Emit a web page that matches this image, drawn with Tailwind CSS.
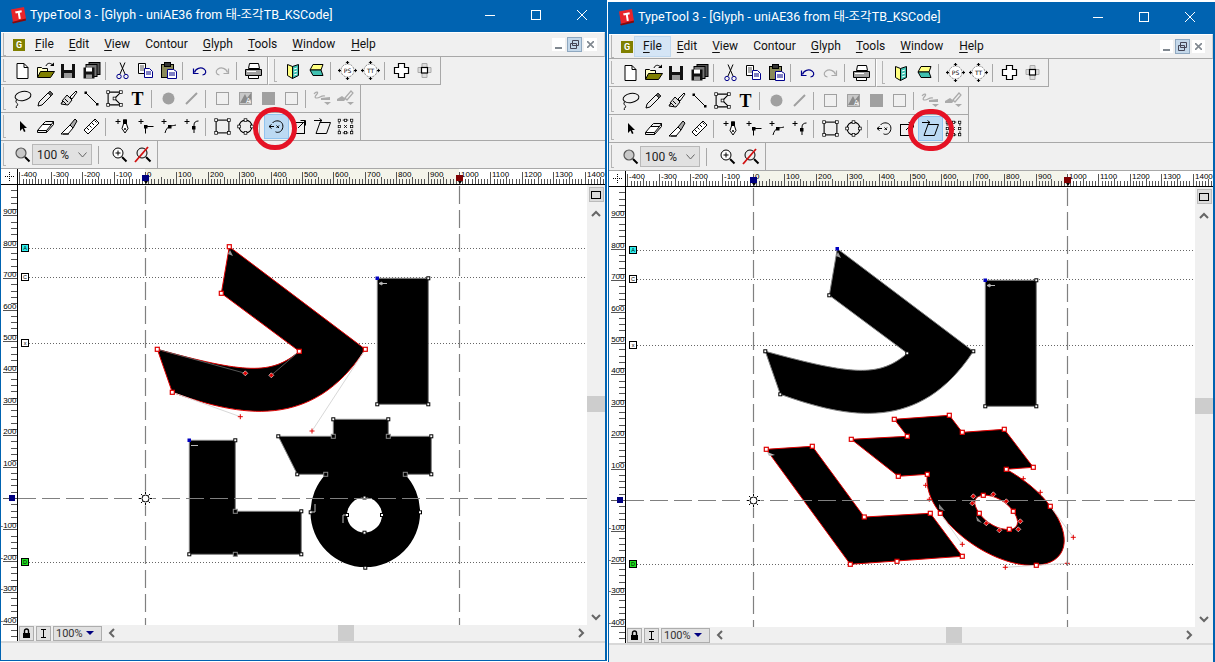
<!DOCTYPE html>
<html lang="ko">
<head>
    <meta charset="UTF-8">
    <title>TypeTool 3</title>
    <script src="https://cdn.jsdelivr.net/npm/@tailwindcss/browser@4"></script>
</head>
<body class="bg-white overflow-hidden">
    <!-- icon set -->
    <svg class="hidden">
        <symbol id="i-new" viewBox="0 0 21 21"><path d="M5 3.500h7l4 4v11H5z" fill="#fff" stroke="#000"/><path d="M12 3.500v4h4" fill="none" stroke="#000"/></symbol>
        <symbol id="i-open" viewBox="0 0 21 21"><path d="M2.500 17V7.500h4l1 1h5v3" fill="#ffffc8" stroke="#000"/><path d="M2.500 17.500l3-6h14l-4 6z" fill="#808000" stroke="#000"/><path d="M11 6c1-3 4-3.500 6-1.500" fill="none" stroke="#000"/><path d="M15 6h4V2.500z" fill="#000"/></symbol>
        <symbol id="i-save" viewBox="0 0 21 21"><rect x="3" y="4" width="14" height="14" fill="#111"/><rect x="6" y="4" width="8" height="6" fill="#eee"/><rect x="6" y="13" width="8" height="5" fill="#999"/></symbol>
        <symbol id="i-saveall" viewBox="0 0 21 21"><rect x="8" y="2.500" width="11" height="12" fill="#555" stroke="#000"/><rect x="5" y="4.500" width="11" height="12" fill="#777" stroke="#000"/><rect x="2.500" y="7.500" width="11" height="11" fill="#111"/><rect x="5" y="7.500" width="6" height="4" fill="#fff"/><rect x="5" y="14.500" width="6" height="4" fill="#999"/></symbol>
        <symbol id="i-cut" viewBox="0 0 21 21"><path d="M8 14L13 2.500M13 14L8 2.500" stroke="#000" fill="none"/><circle cx="7" cy="16.500" r="2.200" fill="none" stroke="#00008b"/><circle cx="14" cy="16.500" r="2.200" fill="none" stroke="#00008b"/></symbol>
        <symbol id="i-copy" viewBox="0 0 21 21"><path d="M3.500 3.500h7v10h-7z" fill="#fff" stroke="#000"/><path d="M5 6h4M5 8h4M5 10h4" stroke="#555"/><path d="M9.500 8.500h5l3 3v6h-8z" fill="#fff" stroke="#00008b"/><path d="M11 12h5M11 14h5" stroke="#00008b"/></symbol>
        <symbol id="i-paste" viewBox="0 0 21 21"><rect x="3.500" y="4.500" width="12" height="13" fill="#8a8a5a" stroke="#000"/><rect x="6.500" y="2.500" width="6" height="4" fill="#333" stroke="#000"/><path d="M9.500 9.500h6l3 2v7h-9z" fill="#fff" stroke="#00008b"/><path d="M11 13h6M11 15h6" stroke="#00008b"/></symbol>
        <symbol id="i-undo" viewBox="0 0 21 21"><path d="M5.500 12.500C6.500 8 12 7 15 9s2 5.500-1.500 6" fill="none" stroke="#00008b" stroke-width="1.200"/><path d="M4.500 8.500v5h5" fill="none" stroke="#00008b" stroke-width="1.200"/></symbol>
        <symbol id="i-redo" viewBox="0 0 21 21"><path d="M15.500 12.500C14.500 8 9 7 6 9s-2 5.500 1.500 6" fill="none" stroke="#aaa" stroke-width="1.200"/><path d="M16.500 8.500v5h-5" fill="none" stroke="#aaa" stroke-width="1.200"/></symbol>
        <symbol id="i-print" viewBox="0 0 21 21"><path d="M6.500 3.500h9l1 5h-11z" fill="#fff" stroke="#000"/><path d="M2.500 9.500h16v6h-16z" fill="#a0a0a0" stroke="#000"/><path d="M5.500 15.500h10v3h-10z" fill="#fff" stroke="#000"/><path d="M4 11.500h9" stroke="#fff"/></symbol>
        <symbol id="i-book1" viewBox="0 0 21 21"><path d="M4.500 4.500l5 2v12l-5-3z" fill="#ffff80" stroke="#000"/><path d="M15.500 4.500l-6 2v12l6-3z" fill="#40c0b0" stroke="#000"/><path d="M11 9l3-1M11 12l3-1M11 15l3-1" stroke="#fff"/></symbol>
        <symbol id="i-book2" viewBox="0 0 21 21"><path d="M7 4.500h10l-2 5.500H4z" fill="#ffff80" stroke="#000"/><path d="M4 10h11l2 5.500H7z" fill="#40c0b0" stroke="#000"/></symbol>
        <symbol id="i-movep" viewBox="0 0 21 21"><circle cx="10.500" cy="10.500" r="6.500" fill="#fff" stroke="#888" stroke-dasharray="2 1"/><path d="M10.500 1v3M10.500 17v3M1 10.500h3M17 10.500h3" stroke="#000"/><path d="M8.500 3l2-2 2 2zM8.500 18l2 2 2-2zM3 8.500l-2 2 2 2zM18 8.500l2 2-2 2z"/><text x="10.500" y="13" text-anchor="middle" font-family="DejaVu Sans" font-size="6">PS</text></symbol>
        <symbol id="i-movet" viewBox="0 0 21 21"><circle cx="10.500" cy="10.500" r="6.500" fill="#fff" stroke="#888" stroke-dasharray="2 1"/><path d="M10.500 1v3M10.500 17v3M1 10.500h3M17 10.500h3" stroke="#000"/><path d="M8.500 3l2-2 2 2zM8.500 18l2 2 2-2zM3 8.500l-2 2 2 2zM18 8.500l2 2-2 2z"/><text x="10.500" y="13" text-anchor="middle" font-family="DejaVu Sans" font-size="6">TT</text></symbol>
        <symbol id="i-plus" viewBox="0 0 21 21"><path d="M7.500 3.500h6v4h4v6h-4v4h-6v-4h-4v-6h4z" fill="#fff" stroke="#000" stroke-width="1.200"/></symbol>
        <symbol id="i-plusg" viewBox="0 0 21 21"><path d="M8 3.500h5v4h4v5h-4v5H8v-5H4v-5h4z" fill="#ddd" stroke="#aaa"/><rect x="7.500" y="7.500" width="6" height="5.500" fill="#fff" stroke="#000" stroke-width="1.200"/></symbol>
        <symbol id="i-lasso" viewBox="0 0 21 21"><ellipse cx="11" cy="8" rx="8" ry="4.500" transform="rotate(-10 11 8)" fill="none" stroke="#000"/><path d="M4.500 12c-2 3 2 3 1 5s-2 1-1 3" fill="none" stroke="#000"/></symbol>
        <symbol id="i-pencil" viewBox="0 0 21 21"><path d="M15 3l3 3L7 17l-4 1 1-4z" fill="#eee" stroke="#000"/><path d="M13 5l3 3" stroke="#000"/><path d="M15 3l3 3-2 2-3-3z" fill="#555"/></symbol>
        <symbol id="i-brush" viewBox="0 0 21 21"><path d="M12 9l6-6 1 1-5 7z" fill="#fff" stroke="#000"/><path d="M9 7l5 5-4 5-7-1 1-2 1 0-1-1z" fill="#ddd" stroke="#000"/><path d="M5 13l3 3M7 11l3 3" stroke="#000"/></symbol>
        <symbol id="i-line" viewBox="0 0 21 21"><path d="M5 5l11 11" stroke="#000"/><rect x="3.500" y="3.500" width="2.500" height="2.500"/><rect x="15" y="15" width="2.500" height="2.500"/></symbol>
        <symbol id="i-shape" viewBox="-1 -1 23 23"><path d="M3.500 3.500h14l-7 7 7 7h-14z" fill="none" stroke="#000" stroke-width="1.200"/><rect x="2" y="2" width="3" height="3" fill="#fff" stroke="#000" stroke-width=".8"/><rect x="16" y="2" width="3" height="3" fill="#fff" stroke="#000" stroke-width=".8"/><rect x="2" y="16" width="3" height="3" fill="#fff" stroke="#000" stroke-width=".8"/><rect x="16" y="16" width="3" height="3" fill="#fff" stroke="#000" stroke-width=".8"/><rect x="9" y="9" width="3" height="3" fill="#fff" stroke="#000" stroke-width=".8"/></symbol>
        <symbol id="i-t" viewBox="0 0 21 21"><text x="10.500" y="17" text-anchor="middle" font-family="Liberation Serif" font-size="18" font-weight="700">T</text></symbol>
        <symbol id="i-dot" viewBox="0 0 21 21"><circle cx="10.500" cy="10.500" r="6" fill="#a0a0a0"/></symbol>
        <symbol id="i-slash" viewBox="0 0 21 21"><path d="M5 16L16 5" stroke="#a0a0a0" stroke-width="2"/></symbol>
        <symbol id="i-box" viewBox="0 0 21 21"><rect x="4.500" y="4.500" width="12" height="12" fill="none" stroke="#a0a0a0"/></symbol>
        <symbol id="i-img" viewBox="0 0 21 21"><rect x="4.500" y="4.500" width="12" height="12" fill="#c8c8c8" stroke="#a0a0a0"/><path d="M5 15l5-9 2 4 4-5v6l-3 4z" fill="#8a8a8a"/><text x="11" y="15" font-family="DejaVu Sans" font-size="7" fill="#fff">A</text></symbol>
        <symbol id="i-solid" viewBox="0 0 21 21"><rect x="4" y="4" width="13" height="13" fill="#a0a0a0"/></symbol>
        <symbol id="i-wave" viewBox="0 0 21 21"><path d="M2 6c2-3 5-2 3 0s-3 4 0 4 4-3 8-2" fill="none" stroke="#aaa" stroke-width="1.200"/><path d="M9 10l9-1v3H9z" fill="#aaa"/><path d="M12 14h7l-3.500 3z" fill="#aaa"/></symbol>
        <symbol id="i-pen" viewBox="0 0 21 21"><path d="M2 11l5-3 4 3-2 2H2z" fill="#aaa"/><path d="M10 10l6-7 2 2-6 7z" fill="none" stroke="#aaa" stroke-width="1.200"/><path d="M12 14h7l-3.500 3z" fill="#aaa"/></symbol>
        <symbol id="i-arrow" viewBox="0 0 21 21"><path d="M8 5v10l2.500-2.500 1.500 3.500 1.500-.8-1.500-3.200h3z" fill="#000"/></symbol>
        <symbol id="i-eraser" viewBox="0 0 21 21"><path d="M2.500 14.500l5-6h9l-5 6z" fill="#fff" stroke="#000"/><path d="M7.500 8.500l3-3h8l-2 3M11.500 14.500v2h-9v-2M18.500 5.500v3l-7 8" fill="none" stroke="#000"/></symbol>
        <symbol id="i-knife" viewBox="0 0 21 21"><path d="M3 18l9-9 3 3-5 6z" fill="#fff" stroke="#000"/><path d="M12 9l5-6 2 2-4 7z" fill="#aaa" stroke="#000"/><path d="M5 18h6" stroke="#000"/></symbol>
        <symbol id="i-ruler" viewBox="0 0 21 21"><path d="M3 14L14 3l4 4L7 18z" fill="#fff" stroke="#000"/><path d="M6 12l2 2M8.500 9.500l2 2M11 7l2 2M13.500 4.500l2 2" stroke="#000"/></symbol>
        <symbol id="i-add1" viewBox="0 0 21 21"><path d="M3.500 5.500h5M6 3v5" stroke="#000"/><path d="M11.500 4h3v4l1.500 4.500-3 4.500-3-4.500L11.500 8z" fill="#fff" stroke="#000"/><rect x="11" y="3.500" width="4" height="4.500"/><circle cx="13" cy="13" r="1"/></symbol>
        <symbol id="i-add2" viewBox="0 0 21 21"><path d="M3.500 5.500h5M6 3v5" stroke="#000"/><path d="M10.500 10.500h8M10.500 10.500v7" stroke="#000"/><rect x="9" y="9" width="3.500" height="3.500"/></symbol>
        <symbol id="i-add3" viewBox="0 0 21 21"><path d="M3.500 5.500h5M6 3v5" stroke="#000"/><path d="M7 17c1-4 3-6.500 5.500-7s4-.5 5.500-1" fill="none" stroke="#000"/><rect x="10" y="9" width="3.500" height="3.500"/></symbol>
        <symbol id="i-add4" viewBox="0 0 21 21"><path d="M3.500 5.500h5M6 3v5" stroke="#000"/><path d="M13 17v-8c0-3 2-4 4.500-4" fill="none" stroke="#000"/><rect x="11" y="10" width="3.500" height="3.500"/></symbol>
        <symbol id="i-rect" viewBox="-1 -1 23 23"><rect x="3.500" y="3.500" width="14" height="14" fill="#eee" stroke="#000" stroke-width="1.200"/><rect x="2" y="2" width="3" height="3" fill="#fff" stroke="#000" stroke-width=".8"/><rect x="16" y="2" width="3" height="3" fill="#fff" stroke="#000" stroke-width=".8"/><rect x="2" y="16" width="3" height="3" fill="#fff" stroke="#000" stroke-width=".8"/><rect x="16" y="16" width="3" height="3" fill="#fff" stroke="#000" stroke-width=".8"/></symbol>
        <symbol id="i-oval" viewBox="-1 -1 23 23"><circle cx="10.500" cy="10.500" r="7" fill="#eee" stroke="#000" stroke-width="1.200"/><rect x="9" y="2" width="3" height="3" fill="#fff" stroke="#000" stroke-width=".8"/><rect x="9" y="16" width="3" height="3" fill="#fff" stroke="#000" stroke-width=".8"/><rect x="2" y="9" width="3" height="3" fill="#fff" stroke="#000" stroke-width=".8"/><rect x="16" y="9" width="3" height="3" fill="#fff" stroke="#000" stroke-width=".8"/></symbol>
        <symbol id="i-rotate" viewBox="0 0 21 21"><path d="M6.500 7C8.500 4.500 13 4 15.500 6.500s1.500 8-2 9.500c-1.500.5-3 .5-4-.2" fill="none" stroke="#000"/><path d="M3 10.500h5M5.500 8.500l-2.500 2 2.500 2" fill="none" stroke="#000"/><path d="M10.500 9.500l2.500 2.500M13 9.500l-2.500 2.500" stroke="#000"/></symbol>
        <symbol id="i-scale" viewBox="0 0 21 21"><rect x="3.500" y="6.500" width="12" height="11" fill="none" stroke="#000"/><path d="M9 12l7-7M11.500 4.500h5V9.500" fill="none" stroke="#000"/></symbol>
        <symbol id="i-skew" viewBox="0 0 21 21"><path d="M8 6.500h10.500l-4 11H4z" fill="none" stroke="#000"/><path d="M2 4.500h8M7.500 2.500l2.500 2-2.500 2" fill="none" stroke="#000"/></symbol>
        <symbol id="i-flip" viewBox="-1 -1 23 23"><rect x="3.500" y="3.500" width="14" height="14" fill="none" stroke="#000" stroke-dasharray="2 2"/><path d="M9 9l3 3M12 9l-3 3" stroke="#000"/><rect x="2.500" y="2.500" width="2.500" height="2.500" fill="#fff" stroke="#000" stroke-width=".8"/><rect x="16" y="2.500" width="2.500" height="2.500" fill="#fff" stroke="#000" stroke-width=".8"/><rect x="2.500" y="16" width="2.500" height="2.500" fill="#fff" stroke="#000" stroke-width=".8"/><rect x="16" y="16" width="2.500" height="2.500" fill="#fff" stroke="#000" stroke-width=".8"/><rect x="9.300" y="2.500" width="2.500" height="2.500" fill="#fff" stroke="#000" stroke-width=".8"/><rect x="9.300" y="16" width="2.500" height="2.500" fill="#fff" stroke="#000" stroke-width=".8"/><rect x="16" y="9.300" width="2.500" height="2.500" fill="#fff" stroke="#000" stroke-width=".8"/><rect x="2.500" y="9.300" width="2.500" height="2.500" fill="#fff" stroke="#000" stroke-width=".8"/></symbol>
        <symbol id="i-zoom" viewBox="0 0 21 21"><circle cx="9" cy="9" r="5" fill="#c8c8c8" stroke="#555" stroke-width="1.200"/><path d="M13 13l4.500 4.500" stroke="#000" stroke-width="2"/></symbol>
        <symbol id="i-zoomin" viewBox="0 0 21 21"><circle cx="9" cy="9" r="5" fill="#fff" stroke="#000"/><path d="M6.500 9h5M9 6.500v5" stroke="#000"/><path d="M13 13l4.500 4.500" stroke="#000" stroke-width="2"/></symbol>
        <symbol id="i-zoomout" viewBox="0 0 21 21"><circle cx="10" cy="9" r="5" fill="#eee" stroke="#000"/><path d="M14 13l4.500 4.500" stroke="#000" stroke-width="2"/><path d="M3 18L16 3" stroke="#d01010" stroke-width="1.800"/></symbol>
    </svg>

    <div id="desk" class="flex gap-px h-[662px] overflow-hidden"></div>

    <script>
        const SCALE = 0.314;
        const ZX = 145, ZY = 498;

        function btn(name, on) {
            const cls = on
                ? 'w-[23px] h-[23px] flex items-center justify-center bg-[#bcdaf3] outline outline-1 outline-[#90c4f0]'
                : 'w-[23px] h-[23px] flex items-center justify-center';
            return `<div class="${cls}"><svg class="w-[21px] h-[21px]"><use href="#i-${name}"/></svg></div>`;
        }
        const sep = '<div class="w-[8px] h-[27px] pl-[2px] flex items-center"><div class="w-px h-[18px] bg-[#a8a8a8]"></div></div>';
        const grip = '<div class="w-[3px] h-[23px] ml-[2px] mr-[5px] border-l border-b border-[#b4b4b4]"></div>';

        function icons(list, active) {
            return list.map(n => n === '|' ? sep : btn(n, n === active)).join('');
        }

        function rulerH() {
            let s = `<rect x="${ZX}" y="169" width="${1000 * SCALE}" height="15" fill="#f4f4ea"/>`;
            for (let u = -400; u <= 1460; u += 10) {
                const x = Math.round(ZX + u * SCALE) + 0.5;
                const top = u % 100 === 0 ? 172 : u % 50 === 0 ? 177 : 179;
                s += `<path d="M${x} ${top}V184" stroke="#555"/>`;
                if (u % 100 === 0 && u <= 1400) s += `<text x="${x + 1.5}" y="177" font-family="Liberation Sans" font-size="8" fill="#000">${u}</text>`;
            }
            s += `<path d="M18 184.500H605" stroke="#000"/>`;
            s += `<rect x="142" y="175" width="7" height="6" fill="#000080"/><path d="M144 181l2 3 2-3z" fill="#000"/>`;
            s += `<rect x="456" y="175" width="7" height="6" fill="#800000"/><path d="M458 181l2 3 2-3z" fill="#000"/>`;
            return s;
        }

        function rulerV() {
            let s = '';
            for (let u = 1000; u >= -460; u -= 20) {
                const y = Math.round(ZY - u * SCALE) + 0.5;
                const left = u % 100 === 0 ? 3 : 11;
                s += `<path d="M${left} ${y}H17" stroke="#555"/>`;
                if (u % 100 === 0 && u <= 900 && u >= -400 && u !== 0) s += `<text x="16.500" y="${y - 1.5}" text-anchor="end" font-family="Liberation Sans" font-size="8" fill="#000">${u}</text>`;
            }
            s += `<path d="M17.500 185V641" stroke="#000"/>`;
            s += `<rect x="9" y="${ZY - 3}" width="6" height="6" fill="#000080"/>`;
            return s;
        }

        function marker(y, label, fill) {
            return `<rect x="21.500" y="${y - 3.5}" width="7" height="7" fill="${fill}" stroke="#000"/><text x="25" y="${y + 2}" text-anchor="middle" font-family="Liberation Sans" font-size="5.500" fill="#000">${label}</text>`;
        }
        function redNode(x, y) {
            return `<rect x="${x - 2}" y="${y - 2}" width="4" height="4" fill="#fff" stroke="#e00000" stroke-width="1.200"/>`;
        }
        function blackNode(x, y) {
            return `<rect x="${x - 1.5}" y="${y - 1.5}" width="3" height="3" fill="#fff" stroke="#000"/>`;
        }
        function grayNode(x, y) {
            return `<rect x="${x - 2}" y="${y - 2}" width="4" height="4" fill="#000" stroke="#888"/>`;
        }
        function plus(x, y) {
            return `<path d="M${x - 2.5} ${y}h5M${x} ${y - 2.5}v5" stroke="#e00000"/>`;
        }
        function diamond(x, y) {
            return `<path d="M${x} ${y - 2.5}l2.500 2.500-2.500 2.500-2.500-2.500z" fill="#e00000" stroke="#fff" stroke-width=".6"/>`;
        }
        function handle(x1, y1, x2, y2, c) {
            return `<path d="M${x1} ${y1}L${x2} ${y2}" stroke="${c || '#d8d8d8'}"/>`;
        }

        const TOP_A = 'M229.300 246.700L365.300 349.300C312 431 240.300 416.700 172.300 392.300L157.300 349.300C245.300 373.300 271.300 375.300 299.300 351.300L221.300 293.300Z';
        const TOP_B = 'M377.300 278.300H428.300V404.300H377.300Z';
        const TOP_PTS = [[221.3, 293.3], [299.3, 351.3], [157.3, 349.3], [172.3, 392.3], [365.3, 349.3]];
        const LOW_L = 'M189.300 440.300H235.300V511.300H301.300V554.300H189.300Z';
        const LOW_H = 'M405.300 474.300H431.300V436.300H388.300V419.300H333.300V436.300H278.300L297.300 474.300H325.700';

        // parts that sit in both windows
        function upper(selected) {
            const stroke = selected ? '#e00000' : '#808080';
            let s = `<path d="${TOP_A}" fill="#000" stroke="${stroke}"/><path d="${TOP_B}" fill="#000" stroke="#808080"/>`;
            if (selected) {
                s += handle(365.3, 349.3, 312, 431) + handle(172.3, 392.3, 240.3, 416.7);
                s += handle(157.3, 349.3, 245.3, 373.3, '#555') + handle(299.3, 351.3, 271.3, 375.3, '#555');
                s += TOP_PTS.map(p => redNode(p[0], p[1])).join('') + redNode(229.3, 246.7);
                s += plus(240.3, 416.7) + plus(312, 431) + diamond(245.3, 373.3) + diamond(271.3, 375.3);
            } else {
                s += TOP_PTS.map(p => blackNode(p[0], p[1])).join('');
                s += `<rect x="227.500" y="245" width="3.500" height="3.500" fill="#0000c0"/>`;
            }
            s += `<path d="M230 250l3 6-5-2z" fill="#999"/>`;
            s += `<rect x="375.500" y="276.500" width="3.500" height="3.500" fill="#0000c0"/><path d="M379 283.500h8M379 283.500l3-1.500v3z" stroke="#bbb"/>`;
            s += [[428.3, 278.3], [377.3, 404.3], [428.3, 404.3]].map(p => blackNode(p[0], p[1])).join('');
            return s;
        }

        function lowerPlain() {
            let s = `<path d="${LOW_L}" fill="#000" stroke="#808080"/><path fill-rule="evenodd" fill="#000" d="M310.500 512.300a54.800 54.800 0 1 0 109.600 0a54.800 54.800 0 1 0 -109.600 0ZM347 515a17.500 17.500 0 1 0 35 0a17.500 17.500 0 1 0 -35 0Z"/><path d="${LOW_H}" fill="#000" stroke="#808080"/>`;
            s += [[235.3, 440.3], [301.3, 511.3], [301.3, 554.3], [189.3, 554.3], [333.3, 419.3], [388.3, 419.3], [431.3, 436.3], [431.3, 474.3], [297.3, 474.3], [278.3, 436.3]].map(p => blackNode(p[0], p[1])).join('');
            s += [[235.3, 511.3], [235.3, 554.3], [333.3, 436.3], [388.3, 436.3], [405.3, 474.3], [325.7, 474.3]].map(p => grayNode(p[0], p[1])).join('');
            s += [[310.7, 512.3], [420, 512.3], [365.3, 567.7], [347, 515], [382, 515], [364.5, 497.5], [364.5, 532.7]].map(p => blackNode(p[0], p[1])).join('');
            s += `<rect x="187.500" y="438.500" width="3.500" height="3.500" fill="#0000c0"/><path d="M191 445.500h7" stroke="#bbb"/>`;
            s += `<path d="M315 504v8h-4M343 515h3M343 515v8" fill="none" stroke="#bbb"/>`;
            return s;
        }

        function lowerSkewed() {
            const on = [[766.3, 449.3], [812.3, 446.3], [864.3, 517], [930.3, 513.3], [962.3, 556.3], [897, 561.3], [850.3, 564.3], [894.3, 419.3], [949.3, 415.3], [962.3, 432.3], [1004.3, 429.3], [1033.3, 467.3], [1006.3, 469.3], [1050.3, 506.3], [1036.3, 565.3], [940.3, 513.3], [927.3, 474.3], [898.3, 476.3], [851.3, 439.3], [907.3, 436.3], [983.3, 495.3], [1013.3, 511.3], [1009.3, 529.3], [979.3, 513.3]];
            const off = [[1023.3, 478.7], [1040.3, 492.3], [1073.3, 537.3], [1067.3, 563.3], [1005.3, 567.3], [962.3, 544.3], [929.3, 499.3], [925.7, 485.3]];
            const dia = [[993.3, 494.3], [1006.3, 501.3], [1020.3, 521.3], [1018.3, 529.3], [999.3, 530.3], [986.3, 523.3], [972.3, 503.3], [973.3, 496.3]];
            let s = `<g transform="translate(-608 -2)">`;
            s += `<path d="M766.300 449.300L812.300 446.300L864.300 517L930.300 513.300L962.300 556.300L850.300 564.300Z" fill="#000" stroke="#e00000"/>`;
            s += `<path fill-rule="evenodd" fill="#000" stroke="#e00000" d="M894.300 419.300L949.300 415.300L962.300 432.300L1004.300 429.300L1033.300 467.300L1006.300 469.300C1023.300 478.700 1040.300 492.300 1050.300 506.300C1073.300 537.300 1067.300 563.300 1036.300 565.300C1005.300 567.300 962.300 544.300 940.300 513.300C929.300 499.300 925.700 485.300 927.300 474.300L898.300 476.300L851.300 439.300L907.300 436.300Z M983.300 495.300C993.300 494.300 1006.300 501.300 1013.300 511.300C1020.300 521.300 1018.300 529.300 1009.300 529.300C999.300 530.300 986.300 523.300 979.300 513.300C972.300 503.300 973.300 496.300 983.300 495.300Z"/>`;
            s += handle(1050.3, 506.3, 1073.3, 537.3) + handle(1036.3, 565.3, 1067.3, 563.3) + handle(1036.3, 565.3, 1005.3, 567.3) + handle(940.3, 513.3, 962.3, 544.3);
            s += on.map(p => redNode(p[0], p[1])).join('') + off.map(p => plus(p[0], p[1])).join('') + dia.map(p => diamond(p[0], p[1])).join('');
            s += `<path d="M767 452l8 3-6 1z" fill="#bbb"/><path d="M939 504l6 7-6-2z" fill="#888"/><path d="M976 516l6 7-5-2z" fill="#888"/>`;
            return s + '</g>';
        }

        function canvas(right) {
            const marks = [[248, 'A', '#30f0f0'], [277, 'C', '#fff'], [343, 'x', '#fff'], [562, 'D', '#20e020']];
            let s = '';
            marks.forEach(m => {
                s += `<path d="M29 ${m[0] + 0.5}H587" stroke="#666" stroke-dasharray="1 2"/>`;
            });
            s += right ? upper(false) + lowerSkewed() : upper(true) + lowerPlain();
            s += `<path d="M145.500 186V625M459.500 186V625" stroke="#808080" stroke-width="1.200" stroke-dasharray="18 6"/>`;
            s += `<path d="M18 498.500H587" stroke="#808080" stroke-width="1.200" stroke-dasharray="18 6"/>`;
            s += `<circle cx="145.500" cy="498.500" r="7" fill="#fff"/><circle cx="145.500" cy="498.500" r="3.500" fill="#fff" stroke="#000"/><path d="M145.500 492v2M145.500 503v2M139 498.500h2M150 498.500h2M141 494l1.500 1.500M148.500 501.500l1.500 1.500M150 494l-1.500 1.500M142.500 501.500L141 503" stroke="#000"/>`;
            marks.forEach(m => { s += marker(m[0], m[1], m[2]); });
            return s;
        }

        function menu(fileOn) {
            const u = t => `<span class="underline underline-offset-2">${t}</span>`;
            return `
                <div class="${fileOn ? 'bg-[#d5e5f5] outline outline-1 outline-[#c0d8ee]' : ''} h-[19px] px-[8px] -ml-[8px]">${u('F')}ile</div>
                <div class="h-[19px] ml-[7px]">${u('E')}dit</div>
                <div class="h-[19px] ml-[15px]">${u('V')}iew</div>
                <div class="h-[19px] ml-[15px]">Contour</div>
                <div class="h-[19px] ml-[15px]">${u('G')}lyph</div>
                <div class="h-[19px] ml-[15px]">${u('T')}ools</div>
                <div class="h-[19px] ml-[15px]">${u('W')}indow</div>
                <div class="h-[19px] ml-[16px]">${u('H')}elp</div>`;
        }

        function win(right) {
            const active = right ? 'skew' : 'rotate';
            const ring = right ? 'left-[299px] top-[107px] w-[46px] h-[42px]' : 'left-[252px] top-[107px] w-[44px] h-[43px]';
            const extra = right ? 'mt-[2px]' : '';
            return `
            <div class="relative ${extra} w-[607px] h-[661px] shrink-0 flex flex-col bg-[#0063b1] border-l border-r-2 border-b border-[#0063b1] font-['Roboto','Noto_Sans_CJK_KR',sans-serif] text-black">
                <!-- title bar -->
                <div class="h-[32px] pb-[2px] shrink-0 flex items-center text-white">
                    <svg class="w-[18px] h-[18px] ml-[8px] mr-[3px]" viewBox="0 0 18 18"><path d="M2 3.500L15 1l2 12-13 3z" fill="#e8242a"/><path d="M3 16l1 1.500 13-3-.2-2z" fill="#8a0808"/><path d="M6 5.500l6.500-1.200.3 2-2 .4 1 6-2 .4-1-6-2 .4z" fill="#fff"/></svg>
                    <div class="text-[12.500px] tracking-[0.05px]">TypeTool 3 - [Glyph - uniAE36 from 태-조각TB_KSCode]</div>
                    <div class="ml-auto flex items-center">
                        <div class="w-[46px] h-[30px] flex items-center justify-center"><div class="w-[10px] h-px bg-white"></div></div>
                        <div class="w-[46px] h-[30px] flex items-center justify-center"><div class="w-[10px] h-[10px] border border-white"></div></div>
                        <div class="w-[46px] h-[30px] flex items-center justify-center"><svg class="w-[10px] h-[10px]" viewBox="0 0 10 10"><path d="M0 0l10 10M10 0L0 10" stroke="#fff"/></svg></div>
                    </div>
                </div>
                <div class="flex-1 min-h-0 flex flex-col bg-[#f0f0f0]">
                    <!-- menu -->
                    <div class="h-[25px] shrink-0 flex items-center border-b border-t border-t-white border-b-[#a8a8a8] border-r border-r-[#d0d0d0] text-[12px] leading-[19px] text-[#111]">
                        ${grip}
                        <div class="w-[14px] h-[14px] ml-px mr-[9px] flex items-center justify-center"><div class="w-[12px] h-[12px] bg-[#808000] text-white text-[9px] font-bold leading-[12px] text-center">G</div></div>
                        ${menu(right)}
                        <div class="ml-auto mr-[7px] flex items-center gap-[2px]">
                            <div class="w-[13px] h-[13px] bg-white flex items-end justify-center pb-[2px]"><div class="w-[7px] h-[2px] bg-[#808890]"></div></div>
                            <div class="w-[15px] h-[15px] bg-[#c4d8ea] border border-[#8fa8c0] flex items-center justify-center"><svg class="w-[11px] h-[11px]" viewBox="0 0 11 11"><path d="M3.500 1.500h6v5h-6zM1.500 4.500h6v5h-6z" fill="#c4d8ea" stroke="#445"/></svg></div>
                            <div class="w-[13px] h-[13px] bg-white flex items-center justify-center"><svg class="w-[7px] h-[7px]" viewBox="0 0 7 7"><path d="M0 0l7 7M7 0L0 7" stroke="#808890" stroke-width="1.600"/></svg></div>
                        </div>
                    </div>
                    <!-- toolbars -->
                    <div class="h-[28px] shrink-0 flex">
                        <div class="w-[267px] h-full flex items-center border-b border-r border-[#a8a8a8]">${grip}${icons(['new', 'open', 'save', 'saveall', '|', 'cut', 'copy', 'paste', '|', 'undo', 'redo', '|', 'print'])}</div>
                        <div class="w-[173px] pl-[3px] h-full flex items-center border-b border-r border-[#a8a8a8] border-l border-l-white">${grip}${icons(['book1', 'book2', '|', 'movep', 'movet', '|', 'plus', 'plusg'])}</div>
                    </div>
                    <div class="h-[28px] shrink-0 flex">
                        <div class="w-[360px] h-full flex items-center border-b border-r border-[#a8a8a8]">${grip}${icons(['lasso', 'pencil', 'brush', 'line', 'shape', 't', '|', 'dot', 'slash', '|', 'box', 'img', 'solid', 'box', '|', 'wave', 'pen'])}</div>
                    </div>
                    <div class="h-[28px] shrink-0 flex border-b border-[#a8a8a8]">
                        <div class="w-[360px] h-full flex items-center border-r border-[#a8a8a8]">${grip}${icons(['arrow', 'eraser', 'knife', 'ruler', '|', 'add1', 'add2', 'add3', 'add4', '|', 'rect', 'oval', '|', 'rotate', 'scale', 'skew', 'flip'], active)}</div>
                    </div>
                    <div class="h-[28px] shrink-0 flex border-b border-[#a8a8a8]">
                        <div class="w-[157px] h-full flex items-center border-r border-[#a8a8a8]">${grip}${btn('zoom')}
                            <div class="w-[60px] -ml-[2px] h-[21px] bg-[#e1e1e1] border border-[#b8b8b8] flex items-center pl-[4px] text-[12px] text-[#222]">100 %<svg class="ml-auto mr-[4px] w-[9px] h-[6px]" viewBox="0 0 9 6"><path d="M.5 .5L4.500 5 8.500 .5" fill="none" stroke="#666"/></svg></div>
                            <div class="w-[16px] h-[27px] pl-[6px] flex items-center"><div class="w-px h-[18px] bg-[#a8a8a8]"></div></div>
                            ${btn('zoomin')}${btn('zoomout')}
                        </div>
                    </div>
                    <!-- ruler -->
                    <div class="h-[16px] shrink-0 flex bg-white">
                        <div class="w-[17px] h-full relative border-r border-b border-black">
                            <svg class="w-[16px] h-[15px]" viewBox="0 0 16 15"><path d="M8.500 3v9M4 7.500h9" stroke="#000" stroke-dasharray="1 1"/></svg>
                        </div>
                        <svg class="w-[587px] h-[16px]" viewBox="18 169 587 16">${rulerH()}</svg>
                    </div>
                    <!-- canvas area -->
                    <div class="flex-1 min-h-0 flex">
                        <svg class="w-[17px] h-[456px] bg-white shrink-0" viewBox="1 185 17 456">${rulerV()}</svg>
                        <div class="flex-1 min-w-0 flex flex-col">
                            <div class="h-[440px] flex">
                                <svg class="w-[569px] h-[440px] bg-white shrink-0" viewBox="18 185 569 440">${canvas(right)}</svg>
                                <div class="flex-1 flex flex-col items-center bg-[#f0f0f0]">
                                    <div class="w-[15px] h-[15px] mt-[2px] bg-[#dcdcdc] border border-[#bbb] flex items-center justify-center"><div class="w-[10px] h-[8px] border border-black"></div></div>
                                    <svg class="w-[10px] h-[7px] mt-[8px]" viewBox="0 0 10 7"><path d="M1 6L5 2l4 4" fill="none" stroke="#666" stroke-width="2"/></svg>
                                    <div class="w-full h-[16px] bg-[#cdcdcd] mt-[179px]"></div>
                                    <svg class="w-[10px] h-[7px] mt-auto mb-[4px]" viewBox="0 0 10 7"><path d="M1 1l4 4 4-4" fill="none" stroke="#666" stroke-width="2"/></svg>
                                </div>
                            </div>
                            <div class="h-[16px] flex items-center bg-[#f0f0f0] pl-px">
                                <div class="w-[15px] h-[15px] bg-[#e1e1e1] border border-[#adadad] flex items-center justify-center"><svg class="w-[9px] h-[10px]" viewBox="0 0 9 10"><path d="M2.500 5V3a2 2 0 0 1 4 0v2" fill="none" stroke="#000" stroke-width="1.400"/><rect x="1" y="5" width="7" height="5"/></svg></div>
                                <div class="w-[15px] h-[15px] ml-[2px] bg-[#e1e1e1] border border-[#adadad] flex items-center justify-center"><svg class="w-[7px] h-[9px]" viewBox="0 0 7 9"><path d="M1 .5h5M1 8.500h5M3.500 .5v8" stroke="#000"/></svg></div>
                                <div class="w-[49px] h-[15px] ml-[2px] bg-[#e1e1e1] border border-[#adadad] flex items-center pl-[2px] text-[11px] leading-none text-[#333]">100%<svg class="ml-auto mr-[7px] w-[8px] h-[4px]" viewBox="0 0 8 4"><path d="M0 0h8L4 4z" fill="#000080"/></svg></div>
                                <svg class="w-[7px] h-[10px] ml-[6px]" viewBox="0 0 7 10"><path d="M6 1L2 5l4 4" fill="none" stroke="#666" stroke-width="2"/></svg>
                                <div class="w-[16px] h-[16px] bg-[#cdcdcd] ml-[223px]"></div>
                                <svg class="w-[7px] h-[10px] ml-[224px]" viewBox="0 0 7 10"><path d="M1 1l4 4-4 4" fill="none" stroke="#666" stroke-width="2"/></svg>
                            </div>
                        </div>
                    </div>
                    <!-- status bar -->
                    <div class="h-[19px] shrink-0 border-t-2 border-t-[#d8d8d8] border-b border-b-[#f0f0f0]"></div>
                </div>
                <div class="absolute ${ring} rounded-full border-[5px] border-[#e51225]"></div>
            </div>`;
        }

        document.getElementById('desk').innerHTML = win(false) + win(true);
    </script>
</body>
</html>
